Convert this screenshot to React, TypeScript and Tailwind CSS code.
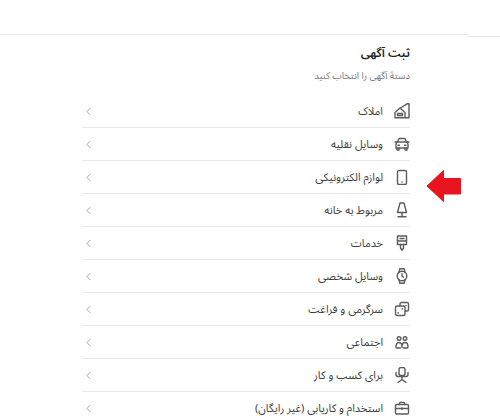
import type { ReactNode } from "react"
import { ChevronLeft } from "lucide-react"

function Icon({ children }: { children: ReactNode }) {
    return (
        <svg width="16" height="16" viewBox="0 0 16 16" fill="none" stroke="#5c5c5c" strokeWidth="1.400" strokeLinecap="round" strokeLinejoin="round">
            {children}
        </svg>
    )
}

const categories: { label: string; icon: ReactNode }[] = [
    {
        label: "املاک",
        icon: (
            <Icon>
                <path d="M6.500 5L13 .8H15V14.800H1V9.500L6 5 11 9.500V14.800" />
                <path d="M3.500 10.500H8.500V12.500H3.500z" />
            </Icon>
        ),
    },
    {
        label: "وسایل نقلیه",
        icon: (
            <Icon>
                <path d="M3.500 6L5 2.500H11L12.500 6" />
                <path d="M1 6H15" />
                <path d="M2.500 6.500L2 8.500V12H14V8.500L13.500 6.500" />
                <path d="M3 12V14H5V12M11 12V14H13V12" />
                <path d="M4 9.200H5.500M10.500 9.200H12" />
            </Icon>
        ),
    },
    {
        label: "لوازم الکترونیکی",
        icon: (
            <Icon>
                <rect x="3.500" y="1.500" width="9" height="14" rx="1.500" />
                <path d="M8 13V13.100" strokeWidth="1.500" />
            </Icon>
        ),
    },
    {
        label: "مربوط به خانه",
        icon: (
            <Icon>
                <path d="M6 1H10L12.500 10.500H3.500z" />
                <path d="M8 10.500V14.800M4 14.800H12" />
            </Icon>
        ),
    },
    {
        label: "خدمات",
        icon: (
            <Icon>
                <path d="M3.500 1H12.500V9.500H3.500z" />
                <path d="M3.500 6H12.500M6 3.500H10" />
                <path d="M6.500 9.500V13L8 15.300 9.500 13V9.500" />
            </Icon>
        ),
    },
    {
        label: "وسایل شخصی",
        icon: (
            <Icon>
                <circle cx="8" cy="8" r="4.800" />
                <path d="M8 5.800V8L9.500 9.200" />
                <path d="M5 4.500L5.800 .8H10.200L11 4.500M5 11.500L5.800 15.200H10.200L11 11.500" />
            </Icon>
        ),
    },
    {
        label: "سرگرمی و فراغت",
        icon: (
            <Icon>
                <path d="M6 5V3A1.500 1.500 0 0 1 7.500 1.500H13A1.500 1.500 0 0 1 14.500 3V8.500A1.500 1.500 0 0 1 13 10H11" />
                <rect x="1.500" y="5" width="9.500" height="9.500" rx="1.500" />
                <path d="M4.200 11.800V11.900M8.200 7.800V7.900M12 4.500V4.600" strokeWidth="1.600" />
            </Icon>
        ),
    },
    {
        label: "اجتماعی",
        icon: (
            <Icon>
                <circle cx="5" cy="4.500" r="1.800" />
                <circle cx="11" cy="4.500" r="1.800" />
                <path d="M6.500 14H3A1 1 0 0 1 2 13C2 10 3.200 8.500 5 8.500 6.500 8.500 7.500 9.500 8 11 8.500 9.500 9.500 8.500 11 8.500 12.800 8.500 14 10 14 13A1 1 0 0 1 13 14H9.500" />
                <path d="M8 11V13.500" />
            </Icon>
        ),
    },
    {
        label: "برای کسب و کار",
        icon: (
            <Icon>
                <rect x="5" y=".5" width="6" height="8" rx="2" />
                <path d="M2 5.500V7.500A2 2 0 0 0 4 9.500H12A2 2 0 0 0 14 7.500V5.500" />
                <path d="M8 9.500V12.500M4 15.500L8 12.500 12 15.500" />
            </Icon>
        ),
    },
    {
        label: "استخدام و کاریابی (غیر رایگان)",
        icon: (
            <Icon>
                <rect x="1.500" y="4.500" width="13" height="9.500" rx="1.200" />
                <path d="M5.500 4.500V3.200A.8.8 0 0 1 6.300 2.400H9.700A.8.8 0 0 1 10.500 3.200V4.500" />
                <path d="M1.500 8.500H14.500M8 7.800V9.500" />
            </Icon>
        ),
    },
]

export default function App() {
    return (
        <div className="relative h-[416px] w-[500px] overflow-hidden bg-white font-['Noto_Sans_Arabic','DejaVu_Sans',sans-serif]">
            <div className="flex h-[37px] items-start">
                <div className="h-[35px] w-[468px] border-b border-[#e8e8e8]" />
                <div className="h-[37px] w-[32px] border-b border-[#e8e8e8]" />
            </div>

            <div dir="rtl" className="ml-[82px] w-[328px]">
                <h1 className="mt-[7px] h-[20px] text-[12px] leading-[20px] font-semibold text-[#1f1f1f]">ثبت آگهی</h1>
                <p className="mt-[3px] h-[18px] text-[9.5px] leading-[18px] text-[#7a7a7a]">دستهٔ آگهی را انتخاب کنید</p>
                <ul className="mt-[10px]">
                    {categories.map((c) => (
                        <li key={c.label} className="flex h-[33px] items-center border-b border-[#e9e9e9]">
                            <span className="flex w-[16px] justify-center">{c.icon}</span>
                            <span className="mr-[11px] pt-px text-[11px] leading-[18px] text-[#3d3d3d]">{c.label}</span>
                            <ChevronLeft className="mr-auto h-[13px] w-[13px] text-[#999999]" strokeWidth={1.6} />
                        </li>
                    ))}
                </ul>
            </div>

            {/* red annotation arrow */}
            <svg className="absolute top-[169px] left-[426px]" width="36" height="34" viewBox="0 0 36 34">
                <path d="M1 17L17.500 1.500V9.500H34.500V25H17.500V32.500z" fill="#e8141f" stroke="#e8141f" strokeLinejoin="round" />
            </svg>
        </div>
    )
}
